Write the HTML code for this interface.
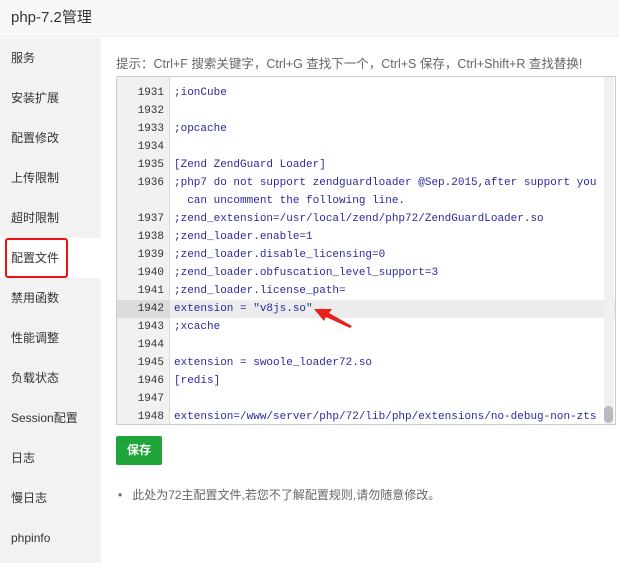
<!DOCTYPE html>
<html><head><meta charset="utf-8"><style>
*{margin:0;padding:0;box-sizing:border-box}
body{width:619px;height:563px;overflow:hidden;background:#fff;font-family:"Liberation Sans","Noto Sans CJK SC",sans-serif;position:relative}
.hd{position:absolute;left:0;top:0;width:619px;height:37px;background:#f8f8f8;border-bottom:1px solid #eee;font-size:15px;color:#333;line-height:36px;padding-left:11px}
.sb{position:absolute;left:0;top:38px;width:101px;height:525px;background:#f2f2f2}
.sb div{position:absolute;left:11px;font-size:12px;color:#333;line-height:20px}
.sel{position:absolute;left:0;top:238px;width:101px;height:40px;background:#fff}
.red{position:absolute;left:5px;top:238px;width:63px;height:40px;border:2px solid #e11;border-radius:3px}
.tip{position:absolute;left:116px;top:53px;font-size:12.5px;color:#666}
.ed{position:absolute;left:116px;top:76px;width:500px;height:349px;border:1px solid #ccc;overflow:hidden;background:#fff}
.gut{position:absolute;left:0;top:0;width:53px;height:100%;background:#f1f1f1;border-right:1px solid #ddd}
.code{position:absolute;left:0;top:-11px;width:100%;font-family:"Liberation Mono",monospace;font-size:11px;line-height:18px}
.r{position:relative;height:18px;white-space:pre}
.r.w{height:36px}
.n{position:absolute;left:0;width:47px;text-align:right;color:#333}
.t{position:absolute;left:57px;color:#2a2aa0}
.hl{background:#ececec}
.hl .n{background:#dcdcdc;width:53px;padding-right:6px}
.sc{position:absolute;right:1px;top:0;width:10px;height:100%;background:#f0f0f0}
.th{position:absolute;right:2px;top:329px;width:9px;height:17px;background:#bbb;border-radius:5px}
.btn{position:absolute;left:116px;top:436px;width:46px;height:29px;background:#20a53a;border-radius:2px;color:#fff;font-size:12px;font-weight:bold;text-align:center;line-height:29px}
.note{position:absolute;left:118px;top:486px;font-size:12px;color:#666}
</style></head><body>
<div class="hd">php-7.2管理</div>
<div class="sb">
<div style="top:10px">服务</div>
<div style="top:50px">安装扩展</div>
<div style="top:90px">配置修改</div>
<div style="top:130px">上传限制</div>
<div style="top:170px">超时限制</div>
</div>
<div class="sel"></div>
<div class="sb" style="background:transparent;top:38px">
<div style="top:210px">配置文件</div>
<div style="top:250px">禁用函数</div>
<div style="top:290px">性能调整</div>
<div style="top:330px">负载状态</div>
<div style="top:370px">Session配置</div>
<div style="top:410px">日志</div>
<div style="top:450px">慢日志</div>
<div style="top:490px">phpinfo</div>
</div>
<div class="red"></div>
<div class="tip">提示：Ctrl+F 搜索关键字，Ctrl+G 查找下一个，Ctrl+S 保存，Ctrl+Shift+R 查找替换!</div>
<div class="ed"><div class="gut"></div>
<div class="code">
<div class="r"><span class="n">1930</span></div>
<div class="r"><span class="n">1931</span><span class="t">;ionCube</span></div>
<div class="r"><span class="n">1932</span></div>
<div class="r"><span class="n">1933</span><span class="t">;opcache</span></div>
<div class="r"><span class="n">1934</span></div>
<div class="r"><span class="n">1935</span><span class="t">[Zend ZendGuard Loader]</span></div>
<div class="r w"><span class="n">1936</span><span class="t">;php7 do not support zendguardloader @Sep.2015,after support you
  can uncomment the following line.</span></div>
<div class="r"><span class="n">1937</span><span class="t">;zend_extension=/usr/local/zend/php72/ZendGuardLoader.so</span></div>
<div class="r"><span class="n">1938</span><span class="t">;zend_loader.enable=1</span></div>
<div class="r"><span class="n">1939</span><span class="t">;zend_loader.disable_licensing=0</span></div>
<div class="r"><span class="n">1940</span><span class="t">;zend_loader.obfuscation_level_support=3</span></div>
<div class="r"><span class="n">1941</span><span class="t">;zend_loader.license_path=</span></div>
<div class="r hl"><span class="n">1942</span><span class="t">extension = "v8js.so"</span></div>
<div class="r"><span class="n">1943</span><span class="t">;xcache</span></div>
<div class="r"><span class="n">1944</span></div>
<div class="r"><span class="n">1945</span><span class="t">extension = swoole_loader72.so</span></div>
<div class="r"><span class="n">1946</span><span class="t">[redis]</span></div>
<div class="r"><span class="n">1947</span></div>
<div class="r"><span class="n">1948</span><span class="t">extension=/www/server/php/72/lib/php/extensions/no-debug-non-zts</span></div>
</div>
<div class="sc"></div><div class="th"></div>
</div>
<svg style="position:absolute;left:0;top:0" width="619" height="563"><polygon points="314,309 332,309 329,313 352,326 350,328 326,317 324,321" fill="#e8211b"/></svg>
<div class="btn">保存</div>
<div class="note">•&nbsp;&nbsp;&nbsp;此处为72主配置文件,若您不了解配置规则,请勿随意修改。</div>
</body></html>
